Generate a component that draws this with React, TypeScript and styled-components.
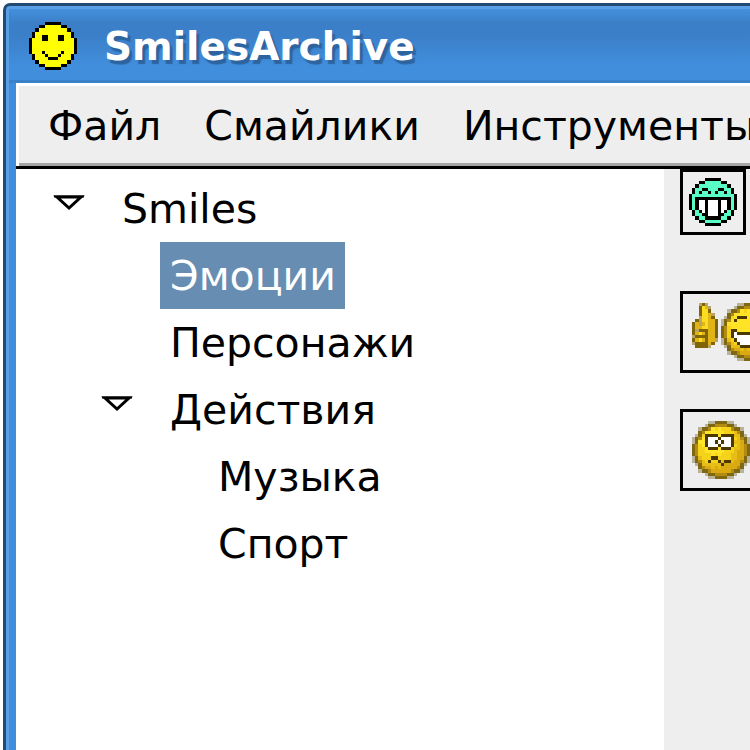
import React, { useState } from "react";
import styled, { createGlobalStyle } from "styled-components";

const GlobalStyle = createGlobalStyle`
  * { box-sizing: border-box; }
  html, body, #root { height: 100%; }
  body {
    margin: 0;
    overflow: hidden;
    background: #fff;
    font-family: "DejaVu Sans", "Noto Sans", sans-serif;
    color: #000;
  }
  button {
    margin: 0;
    padding: 0;
    border: 0;
    background: none;
    color: inherit;
    font: inherit;
  }
  svg { display: block; flex: none; }
`;

const Stage = styled.div`
  height: 100%;
  padding: 3px 0 0 3px;
  overflow: hidden;
`;

const Window = styled.div`
  height: 100%;
  display: flex;
  flex-direction: column;
  border-top: 3px solid #234a72;
  border-left: 3px solid #234a72;
  border-top-left-radius: 7px;
  background: #3f8ddb;
  box-shadow: inset 3px 3px 0 #5aa0e6;
`;

const TitleBar = styled.header`
  flex: none;
  height: 74px;
  display: flex;
  align-items: center;
  gap: 27px;
  margin: 3px 0 0 3px;
  padding-left: 20px;
  background: linear-gradient(#4490dc 0, #3b7fc8 14px, #3b7fc8 26px, #418edc 56px, #418edc 71px, #3a80ca 71px);
`;

const Title = styled.h1`
  margin: 0;
  padding-top: 2px;
  font-size: 39px;
  line-height: 48px;
  font-weight: 700;
  color: #fff;
  text-shadow: 3px 4px 1px #2d649f;
  white-space: nowrap;
`;

const Client = styled.div`
  flex: 1;
  min-height: 0;
  display: flex;
  flex-direction: column;
  margin-left: 10px;
  background: #eee;
`;

const MenuBar = styled.nav`
  flex: none;
  height: 86px;
  display: flex;
  align-items: center;
  gap: 43px;
  padding: 0 0 0 32px;
  border-top: 3px solid #fff;
  border-bottom: 3px solid #000;
  box-shadow: inset 3px 0 0 #fff, inset 0 -3px 0 #a5a5a5;
  overflow: hidden;
`;

const MenuButton = styled.button`
  flex: none;
  font-size: 41px;
  line-height: 48px;
`;

const Body = styled.div`
  flex: 1;
  min-height: 0;
  display: flex;
`;

const Tree = styled.ul`
  flex: 1;
  min-width: 0;
  margin: 0;
  padding: 6px 0 0;
  list-style: none;
  background: #fff;
`;

const TreeRow = styled.li<{ $level: number }>`
  display: flex;
  gap: 27px;
  height: 67px;
  padding-left: ${({ $level }) => 37 + $level * 48}px;
`;

const Toggle = styled.button`
  flex: none;
  width: 32px;
  padding-bottom: 12px;
`;

const TreeLabel = styled.button<{ $selected: boolean }>`
  padding: 0 9px 0 10px;
  font-size: 41px;
  line-height: 66px;
  text-align: left;
  background: ${({ $selected }) => ($selected ? "#678db2" : "transparent")};
  color: ${({ $selected }) => ($selected ? "#fff" : "#000")};
`;

const Gallery = styled.section`
  flex: none;
  width: 86px;
  display: flex;
  flex-direction: column;
  align-items: flex-start;
  padding-left: 16px;
`;

const Thumb = styled.button<{ $before: number; $pad: number }>`
  display: flex;
  align-items: flex-start;
  gap: 3px;
  margin-top: ${({ $before }) => $before}px;
  padding: ${({ $pad }) => $pad}px;
  border: 3px solid #000;
`;

type Palette = Record<string, string>;

function Pixels({ map, palette, cell = 16 }: { map: string[]; palette: Palette; cell?: number }) {
  const cols = map[0].length;
  return (
    <svg
      width={Math.round((cols * cell) / 5)}
      height={Math.round((map.length * cell) / 5)}
      viewBox={`0 0 ${cols} ${map.length}`}
      shapeRendering="crispEdges"
      aria-hidden="true"
    >
      {map.flatMap((row, y) =>
        [...row].map((c, x) =>
          palette[c] ? <rect key={`${x}-${y}`} x={x} y={y} width={1} height={1} fill={palette[c]} /> : null,
        ),
      )}
    </svg>
  );
}

const SMILE = [
  ".....kkkkk.....",
  "...kkyyyyykk...",
  "..kyyyyyyyyyk..",
  ".kyyyyyyyyyyyk.",
  ".kyykkyyykkyyk.",
  "kyyykkyyykkyyyk",
  "kyyyyyyyyyyyyyk",
  "kyyyyyyyyyyyyyk",
  "kyyyyyyyyyyyyyk",
  "kyyykyyyyykyyyk",
  ".kyyykyyykyyyk.",
  ".kyyyykkkyyyyk.",
  "..kyyyyyyyyyk..",
  "...kkyyyyykk...",
  ".....kkkkk.....",
];

const GRIN = [
  ".....kkkkk.....",
  "...kkgggggkk...",
  "..kgggggggggk..",
  ".kggkkgggkkggk.",
  ".kgkggkgkggkgk.",
  "kgggggggggggggk",
  "kgkkkkkkkkkkkgk",
  "kgkwwkwwwkwwkgk",
  "kgkwwkwwwkwwkgk",
  "kgkwwkwwwkwwkgk",
  ".kgkwkwwwkwkgk.",
  ".kggkkwwwkkggk.",
  "..kggkkkkkggk..",
  "...kkgggggkk...",
  ".....kkkkk.....",
];

const THUMB_UP = [
  "..mkm...",
  "..kYym..",
  "..kYYk..",
  "..kYYym.",
  "..mYYyk.",
  ".kmYYyyk",
  "kymyYyyk",
  "kyyYYyyk",
  "kmkkkyyk",
  "kyYykyyk",
  "mkkkkyyk",
  "kyYykyym",
  "mkkkkyk.",
  ".kkkkm..",
];

const LAUGH = [
  "..................",
  "..................",
  "..................",
  "..................",
  ".....kkk..kkk.....",
  "....k........k....",
  "..................",
  "..................",
  "...kk........kk...",
  "...kwkkkkkkkkwk...",
  "...kwwwwwwwwwwk...",
  "....kwwwwwwwwk....",
  ".....kwwwwwwk.....",
  "......kkkkkk......",
  "..................",
  "..................",
  "..................",
  "..................",
];

const DIZZY = [
  "..................",
  "..................",
  "..................",
  "..................",
  "....kkkk.kkkk.....",
  "....kwwwkwwwk.....",
  "....kwwkwkwwk.....",
  "....kwwwkwwwk.....",
  ".....kkk.kkk......",
  "..................",
  "..................",
  "......kk..........",
  ".....k..k.kk......",
  ".........k........",
  "..................",
  "..................",
  "..................",
  "..................",
];

function ballColor(x: number, y: number): string | null {
  const r = Math.hypot(x - 8.5, y - 8.5);
  if (r > 9.3) return null;
  if (r > 8.7) return "#b9b39b";
  if (r > 7.9) return "#806711";
  if (r > 7.2) return "#b28c12";
  const shade = Math.hypot(x - 6.5, y - 6) + ((x + y) % 2) * 0.5;
  if (shade > 8.3) return "#d9aa12";
  if (shade > 6.8) return "#e8bd16";
  if (shade > 4.5) return "#f5d31b";
  return "#ffe326";
}

function Ball({ face }: { face: string[] }) {
  return (
    <svg width={58} height={58} viewBox="0 0 18 18" shapeRendering="crispEdges" aria-hidden="true">
      {face.flatMap((row, y) =>
        [...row].map((c, x) => {
          const fill = c === "k" ? "#4b3900" : c === "w" ? "#fff" : ballColor(x, y);
          return fill ? <rect key={`${x}-${y}`} x={x} y={y} width={1} height={1} fill={fill} /> : null;
        }),
      )}
    </svg>
  );
}

function Arrow() {
  return (
    <svg width={32} height={16} viewBox="0 0 32 16" aria-hidden="true">
      <path d="M4 2H28L16 13Z" fill="#fff" stroke="#000" strokeWidth="3" />
      <path d="M1 1.5H31" stroke="#000" strokeWidth="2" />
    </svg>
  );
}

const ITEMS = [
  { name: "Smiles", level: 0, branch: true },
  { name: "Эмоции", level: 1, branch: false },
  { name: "Персонажи", level: 1, branch: false },
  { name: "Действия", level: 1, branch: true },
  { name: "Музыка", level: 2, branch: false },
  { name: "Спорт", level: 2, branch: false },
];

export default function App() {
  const [selected, setSelected] = useState("Эмоции");
  return (
    <Stage>
      <GlobalStyle />
      <Window>
        <TitleBar>
          <Pixels map={SMILE} palette={{ k: "#000", y: "#ff0" }} />
          <Title>SmilesArchive</Title>
        </TitleBar>
        <Client>
          <MenuBar>
            <MenuButton>Файл</MenuButton>
            <MenuButton>Смайлики</MenuButton>
            <MenuButton>Инструменты</MenuButton>
          </MenuBar>
          <Body>
            <Tree role="tree">
              {ITEMS.map(({ name, level, branch }) => (
                <TreeRow
                  key={name}
                  $level={level}
                  role="treeitem"
                  aria-level={level + 1}
                  aria-selected={selected === name}
                  aria-expanded={branch ? true : undefined}
                >
                  {branch ? (
                    <Toggle aria-label={name}>
                      <Arrow />
                    </Toggle>
                  ) : (
                    <Toggle as="span" />
                  )}
                  <TreeLabel $selected={selected === name} onClick={() => setSelected(name)}>
                    {name}
                  </TreeLabel>
                </TreeRow>
              ))}
            </Tree>
            <Gallery>
              <Thumb $before={0} $pad={6} aria-label="Grin">
                <Pixels map={GRIN} palette={{ k: "#000", g: "#5affc8", w: "#fff" }} />
              </Thumb>
              <Thumb $before={56} $pad={9} aria-label="Thumbs up">
                <Pixels map={THUMB_UP} palette={{ k: "#806508", m: "#b8a468", y: "#e0b414", Y: "#fbdc20" }} />
                <Ball face={LAUGH} />
              </Thumb>
              <Thumb $before={36} $pad={9} aria-label="Dizzy">
                <Ball face={DIZZY} />
              </Thumb>
            </Gallery>
          </Body>
        </Client>
      </Window>
    </Stage>
  );
}
